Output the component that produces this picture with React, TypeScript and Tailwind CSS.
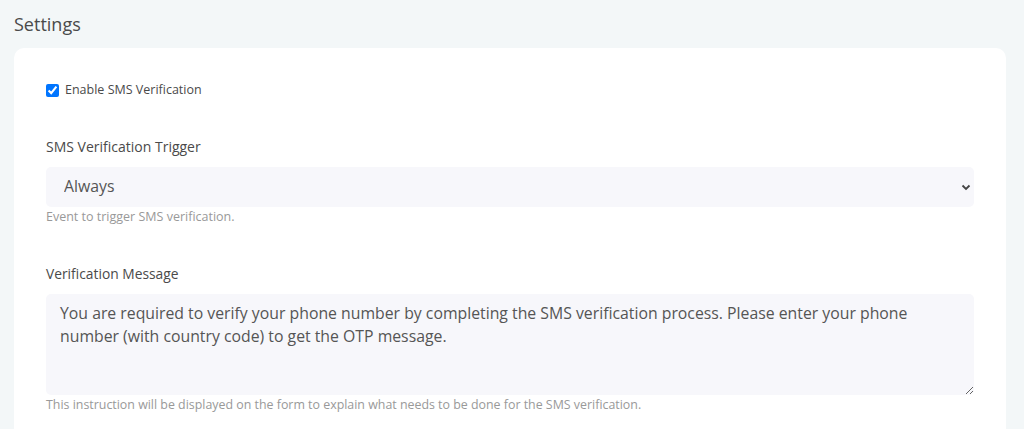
import React from "react";

export default function App() {
  const font = { fontFamily: '"Open Sans", "Liberation Sans", sans-serif' };
  return (
    <div className="min-h-[429px] w-full bg-[#f3f7f8] text-[#4a4a4a]" style={font}>
      <div className="px-[14px] pt-[12px]">
        <h1 className="text-[18px] leading-[24px] text-[#4a4a4a] font-normal">Settings</h1>
        <div className="mt-[12px] w-[992px] rounded-[10px] bg-white px-[32px] pt-[33px] pb-[40px]">
          <label className="flex h-[18px] items-center gap-[6px]">
            <input type="checkbox" defaultChecked className="m-0 h-[13px] w-[13px]" />
            <span className="text-[12.5px] leading-[18px] text-[#4a4a4a]">Enable SMS Verification</span>
          </label>

          <div className="mt-[39px]">
            <div className="text-[14px] leading-[18px] text-[#4a4a4a]">SMS Verification Trigger</div>
            <div className="relative mt-[11px]">
              <select
                defaultValue="always"
                className="block h-[40px] w-full appearance-none rounded-[5px] bg-[#f7f7fb] pl-[18px] text-[15.8px] text-[#555] outline-none"
                style={font}
              >
                <option value="always">Always</option>
              </select>
              <svg
                className="pointer-events-none absolute right-[3px] top-[17px]"
                width="10"
                height="7"
                viewBox="0 0 10 7"
              >
                <path d="M1.5 1.5 L5 5 L8.5 1.5" fill="none" stroke="#444" strokeWidth="1.8" />
              </svg>
            </div>
            <div className="mt-[2px] text-[12.5px] leading-[16px] text-[#999]">Event to trigger SMS verification.</div>
          </div>

          <div className="mt-[40px]">
            <div className="text-[13.8px] leading-[18px] text-[#4a4a4a]">Verification Message</div>
            <textarea
              className="mt-[11px] block h-[101px] w-full rounded-[5px] bg-[#f7f7fb] pl-[14px] pr-[30px] py-[8px] text-[15.8px] leading-[23px] text-[#555] outline-none"
              style={font}
              defaultValue="You are required to verify your phone number by completing the SMS verification process. Please enter your phone number (with country code) to get the OTP message."
            />
            <div className="mt-[2px] text-[12.4px] leading-[16px] text-[#999]">
              This instruction will be displayed on the form to explain what needs to be done for the SMS verification.
            </div>
          </div>
        </div>
      </div>
    </div>
  );
}
